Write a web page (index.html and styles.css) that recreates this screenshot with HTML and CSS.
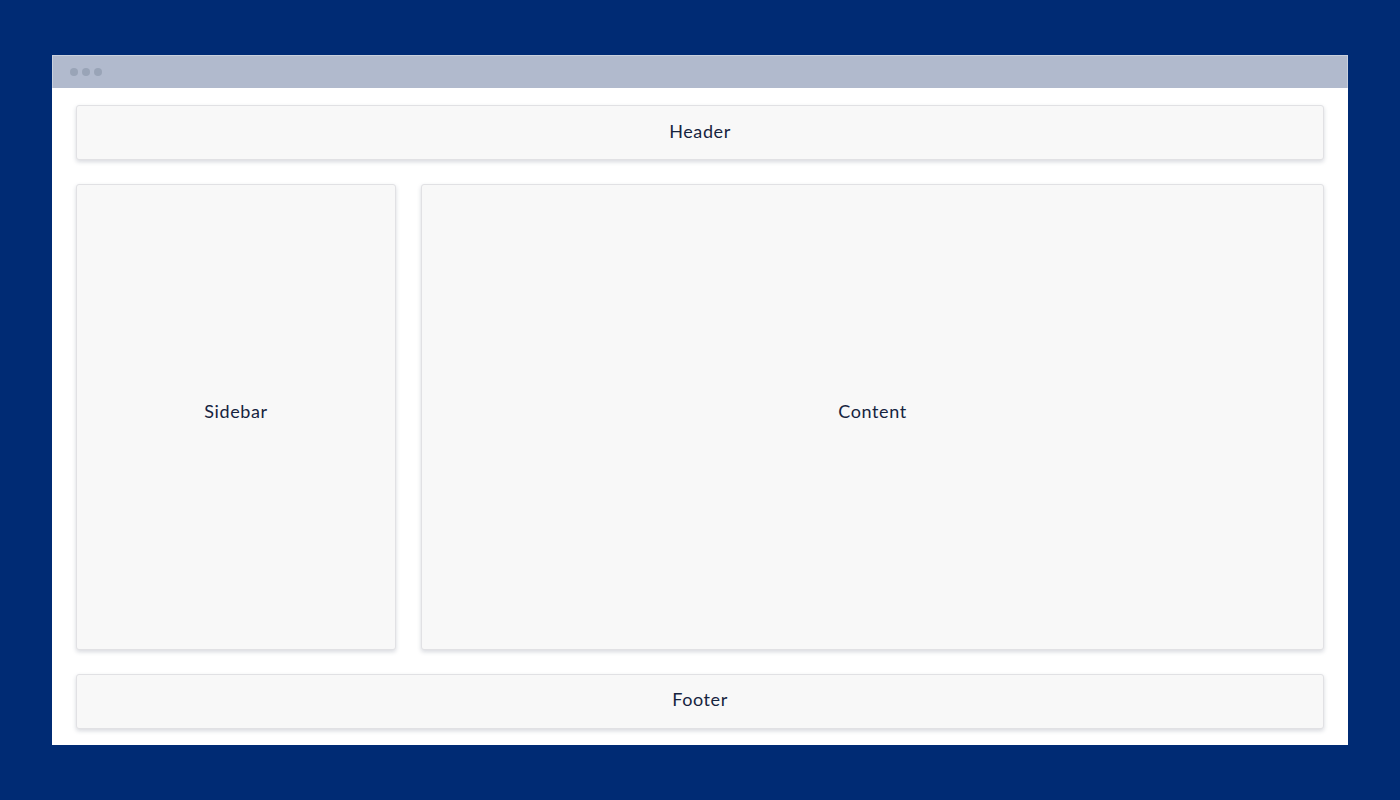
FILE: index.html
```html
<!DOCTYPE html>
<html lang="en">
<head>
    <meta charset="UTF-8">
    <meta name="viewport" content="width=device-width, initial-scale=1.0">
    <title>Layout</title>
    <link rel="stylesheet" href="styles.css">
</head>
<body>
    <div class="window">
        <div class="title-bar">
            <span class="dot"></span>
            <span class="dot"></span>
            <span class="dot"></span>
        </div>

        <div class="page">
            <div class="box header">Header</div>

            <div class="main">
                <div class="box sidebar">Sidebar</div>
                <div class="box content">Content</div>
            </div>

            <div class="box footer">Footer</div>
        </div>
    </div>
</body>
</html>
```

FILE: styles.css
```css
* {
    margin: 0;
    padding: 0;
    box-sizing: border-box;
    font-family: 'Lato', 'Noto Sans', sans-serif;
}

body {
    background-color: #002b74;
    width: 1400px;
    height: 800px;
    padding: 55px 52px;
}

.window {
    background-color: white;
    width: 1296px;
    height: 690px;
    display: flex;
    flex-direction: column;
}

.title-bar {
    height: 33px;
    background-color: #b1bacd;
    border: 1px solid #c9d0dd;
    border-bottom: none;
    display: flex;
    align-items: center;
    gap: 4px;
    padding-left: 17px;
}

.dot {
    width: 8px;
    height: 8px;
    border-radius: 50%;
    background-color: #99a4b7;
}

.page {
    flex: 1;
    display: flex;
    flex-direction: column;
    gap: 24px;
    padding: 17px 24px 16px;
}

.box {
    background-color: #f8f8f8;
    border: 1px solid #e1e1e4;
    border-radius: 3px;
    box-shadow: 0 2px 4px rgba(40, 50, 80, 0.18);
    display: flex;
    align-items: center;
    justify-content: center;
    color: #16243f;
    font-size: 18px;
    letter-spacing: 0.6px;
}

.header {
    height: 55px;
    padding-bottom: 3px;
}

.footer {
    height: 55px;
    padding-bottom: 6px;
}

.main {
    flex: 1;
    display: flex;
    gap: 25px;
}

.sidebar {
    width: 320px;
    padding-bottom: 12px;
}

.content {
    flex: 1;
    padding-bottom: 12px;
}
```
